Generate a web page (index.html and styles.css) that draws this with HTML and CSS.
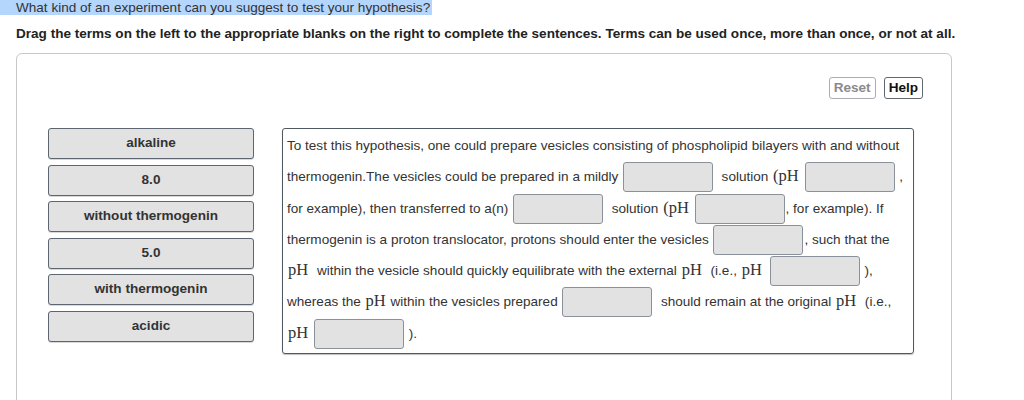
FILE: index.html
```html
<!DOCTYPE html>
<html>
<head>
<meta charset="utf-8">
<link rel="stylesheet" href="styles.css">
</head>
<body>
<div class="question">What kind of an experiment can you suggest to test your hypothesis?</div>
<p class="instructions">Drag the terms on the left to the appropriate blanks on the right to complete the sentences. Terms can be used once, more than once, or not at all.</p>
<div class="box">
  <div class="toolbar">
    <button class="btn btn-reset">Reset</button>
    <button class="btn btn-help">Help</button>
  </div>
  <div class="workarea">
    <div class="terms">
      <div class="term">alkaline</div>
      <div class="term">8.0</div>
      <div class="term">without thermogenin</div>
      <div class="term">5.0</div>
      <div class="term">with thermogenin</div>
      <div class="term">acidic</div>
    </div>
    <div class="passage">To test this hypothesis, one could prepare vesicles consisting of phospholipid bilayers with and without thermogenin.The vesicles could be prepared in a mildly <span class="blank"></span> &nbsp;solution <span class="m">(pH</span> <span class="blank"></span> , for example), then transferred to a(n) <span class="blank"></span> &nbsp;solution <span class="m">(pH</span> <span class="blank"></span>, for example). If thermogenin is a proton translocator, protons should enter the vesicles <span class="blank"></span>, such that the <span class="m sp">pH</span> within the vesicle should quickly equilibrate with the external <span class="m sp">pH</span> (i.e., <span class="m">pH</span> <span class="blank wide"></span> ), whereas the <span class="m">pH</span> within the vesicles prepared <span class="blank"></span> &nbsp;should remain at the original <span class="m sp">pH</span> (i.e., <span class="m">pH</span> <span class="blank"></span> ).</div>
  </div>
</div>
</body>
</html>
```

FILE: styles.css
```css
html, body {
  margin: 0;
  padding: 0;
  overflow: hidden;
  background: #fff;
}

body {
  font-family: "Liberation Sans", Arial, sans-serif;
  font-size: 13.55px;
  color: #333;
}

.question {
  display: inline-block;
  background: #b4d5fc;
  padding: 0 2px 0 16px;
  line-height: 15px;
  height: 15px;
  color: #333;
}

.instructions {
  margin: 11px 0 0 16px;
  font-weight: bold;
  line-height: 15px;
  color: #222;
}

.box {
  margin: 12px 0 0 16px;
  height: 380px;
  width: 936px;
  border: 1px solid #c9c9c9;
  border-radius: 6px;
  box-sizing: border-box;
}

.toolbar {
  display: flex;
  justify-content: flex-end;
  gap: 8px;
  padding: 23px 28px 0 0;
}

.btn {
  height: 22px;
  padding: 0 4px;
  font-family: "Liberation Sans", Arial, sans-serif;
  font-size: 13.55px;
  font-weight: bold;
  background: #fff;
  border-radius: 3px;
  line-height: 20px;
}

.btn-reset {
  color: #8a8a8a;
  border: 1px solid #a9adb3;
}

.btn-help {
  color: #111;
  border: 1px solid #5f6770;
}

.workarea {
  display: flex;
  align-items: flex-start;
  gap: 28px;
  padding: 29px 0 0 31px;
}

.terms {
  display: flex;
  flex-direction: column;
  gap: 5.6px;
  width: 206px;
}

.term {
  height: 31px;
  box-sizing: border-box;
  border: 1px solid #5c6570;
  border-radius: 3px;
  background: #e2e2e2;
  text-align: center;
  font-weight: bold;
  line-height: 28px;
  color: #333;
  box-shadow: 0 1px 0 rgba(0, 0, 0, 0.15);
}

.passage {
  width: 632px;
  height: 226px;
  box-sizing: border-box;
  border: 1px solid #4e5962;
  border-radius: 3px;
  padding: 1px 6px 0 4px;
  line-height: 31.3px;
  color: #333;
  box-shadow: 0 1px 1px rgba(0, 0, 0, 0.25);
}

.blank {
  display: inline-block;
  width: 90px;
  height: 30px;
  box-sizing: border-box;
  border: 1px solid #8b919b;
  border-radius: 3px;
  background: #e2e2e2;
  vertical-align: -11px;
  margin: 0 1px;
}

.blank.wide {
  margin-left: 3px;
}

.m {
  font-family: "Liberation Serif", "Times New Roman", serif;
  font-size: 16.5px;
  line-height: 0;
  color: #333;
  margin: 0 1px;
}

.sp {
  margin-right: 5px;
}
```
